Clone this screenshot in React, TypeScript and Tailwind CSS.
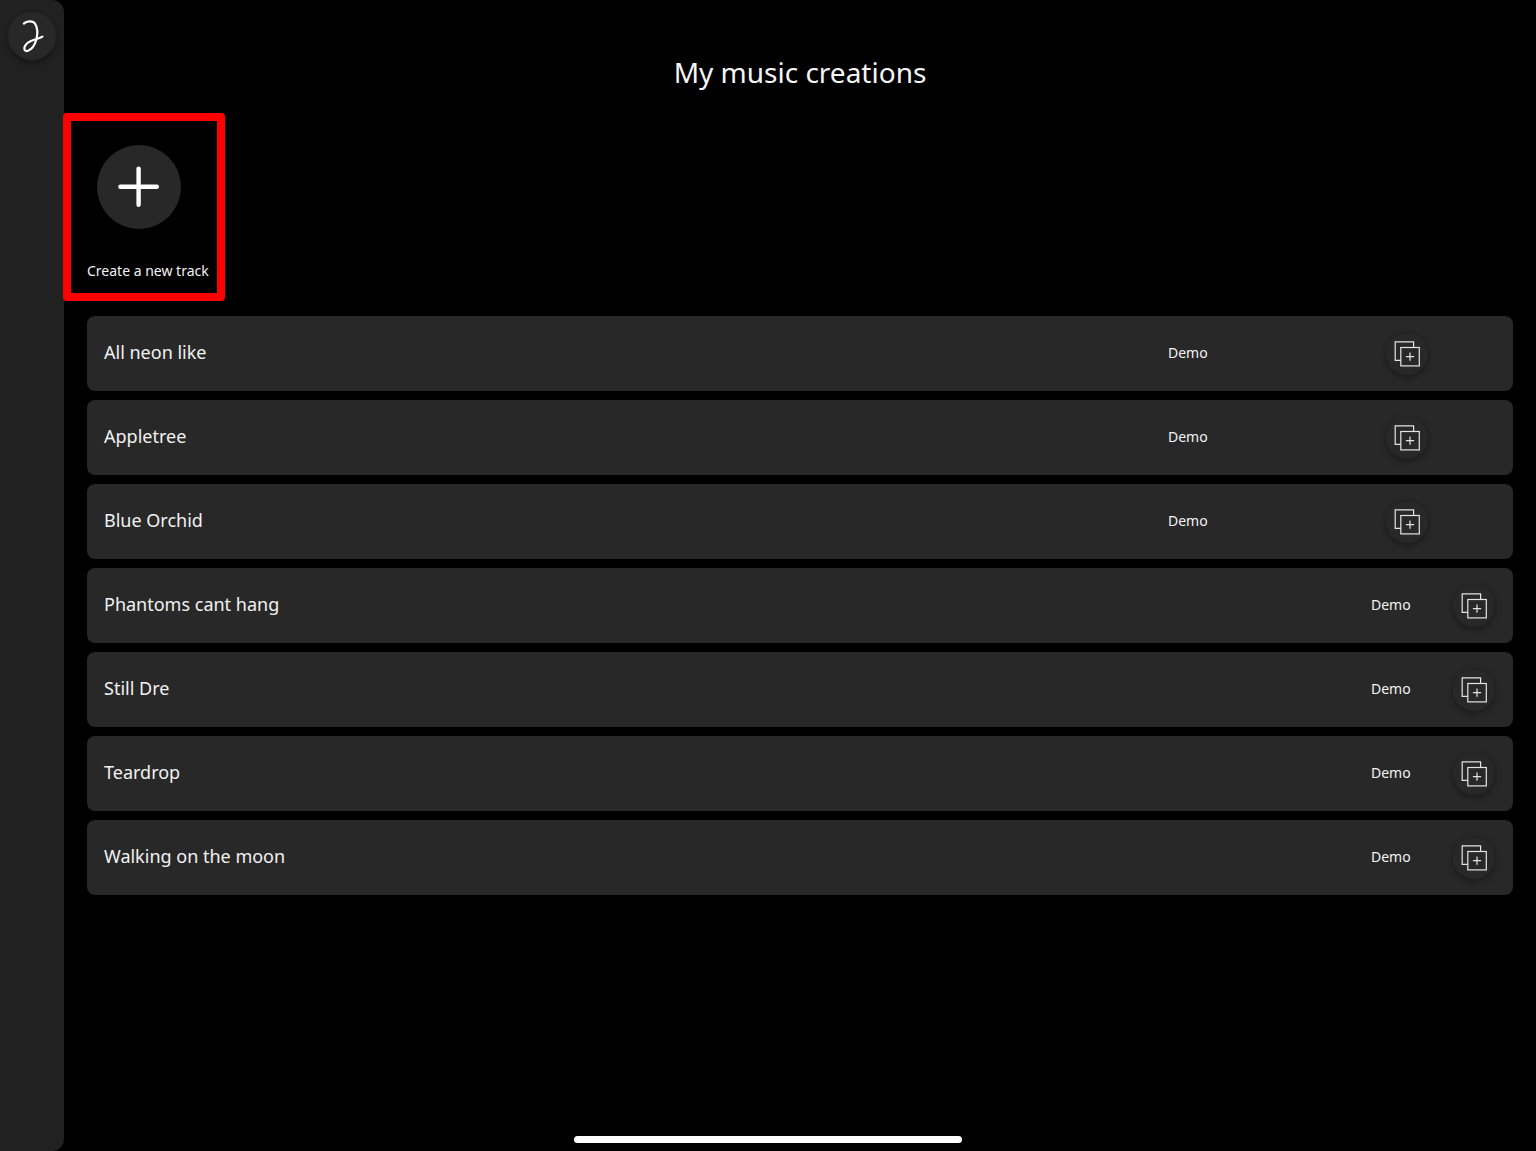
import React from "react";

type Track = { name: string; wide?: boolean };

const tracks: Track[] = [
  { name: "All neon like", wide: true },
  { name: "Appletree", wide: true },
  { name: "Blue Orchid", wide: true },
  { name: "Phantoms cant hang" },
  { name: "Still Dre" },
  { name: "Teardrop" },
  { name: "Walking on the moon" },
];

const DuplicateIcon = () => (
  <svg width="26" height="26" viewBox="0 0 26 26" fill="none" stroke="#e4e4e4" strokeWidth="1.2" aria-hidden="true">
    <path d="M6.8 19.4H1.2V0.8H19.6V6.5" />
    <rect x="6.8" y="6.5" width="18.5" height="18.4" />
    <path d="M16 11.6V19.8M11.9 15.7H20.1" />
  </svg>
);

const Sidebar = () => (
  <nav className="w-16 shrink-0 rounded-r-xl bg-[#212121] pt-3">
    <button
      type="button"
      aria-label="Home"
      className="mx-auto flex size-12 items-center justify-center rounded-full bg-[#282828] shadow-[0_3px_6px_rgba(0,0,0,0.35)]"
    >
      <svg width="24" height="34" viewBox="0 0 24 34" fill="none" stroke="#fff" strokeWidth="2.2" strokeLinecap="round" strokeLinejoin="round" aria-hidden="true">
        <path d="M3.8 4.6C6.5 2 12.8 1.2 15 4.6C17.6 8.5 17.8 15 16.2 21C14.6 26.4 11.5 30.5 8 31.8C5.6 32.6 4 31.2 4.4 28.8C5.2 24.6 9.5 22.2 14 20.8C17.5 19.6 20.2 19 22.4 17.6" />
      </svg>
    </button>
  </nav>
);

const CreateTrack = () => (
  <div className="relative mt-[47px] self-start">
    <button type="button" className="flex flex-col items-start pt-2 text-sm text-[#f2f2f2]">
      <span className="ml-2.5 flex size-21 items-center justify-center rounded-full bg-[#282828]">
        <svg width="42" height="42" viewBox="0 0 42 42" stroke="#fff" strokeWidth="4.4" strokeLinecap="round" aria-hidden="true">
          <path d="M20.6 2.6V38.8M2.4 20.8H38.8" />
        </svg>
      </span>
      <span className="mt-8 leading-5">Create a new track</span>
    </button>
    <div className="pointer-events-none absolute -top-6 -right-4 -bottom-5 -left-6 rounded border-8 border-[#fe0000]" />
  </div>
);

const TrackRow = (props: Track) => (
  <li className="flex h-[75px] items-center rounded-lg bg-[#282828] pl-[17px] text-[#f2f2f2]">
    <span className="flex-1 pb-1 text-lg">{props.name}</span>
    <span className={props.wide ? "w-[218px] pb-0.5 text-sm" : "w-[82px] pb-0.5 text-sm"}>Demo</span>
    <button
      type="button"
      aria-label={`Duplicate ${props.name}`}
      className={`flex size-[42px] items-center justify-center rounded-full bg-[#282828] shadow-[0_2px_6px_rgba(0,0,0,0.4)] ${props.wide ? "mr-[85px]" : "mr-[18px]"}`}
    >
      <DuplicateIcon />
    </button>
  </li>
);

export default function App() {
  return (
    <div className="flex min-h-screen bg-black font-['Noto_Sans',sans-serif]">
      <Sidebar />
      <main className="flex flex-1 flex-col px-[23px] pt-[54px]">
        <h1 className="text-center text-[28px] leading-9 text-[#f5f5f5]">My music creations</h1>
        <CreateTrack />
        <ul className="mt-[35px] flex flex-col gap-[9px]">
          {tracks.map((t) => (
            <TrackRow key={t.name} name={t.name} wide={t.wide} />
          ))}
        </ul>
      </main>
      <div className="fixed bottom-2 left-1/2 h-[7px] w-[388px] -translate-x-1/2 rounded-full bg-white" />
    </div>
  );
}
